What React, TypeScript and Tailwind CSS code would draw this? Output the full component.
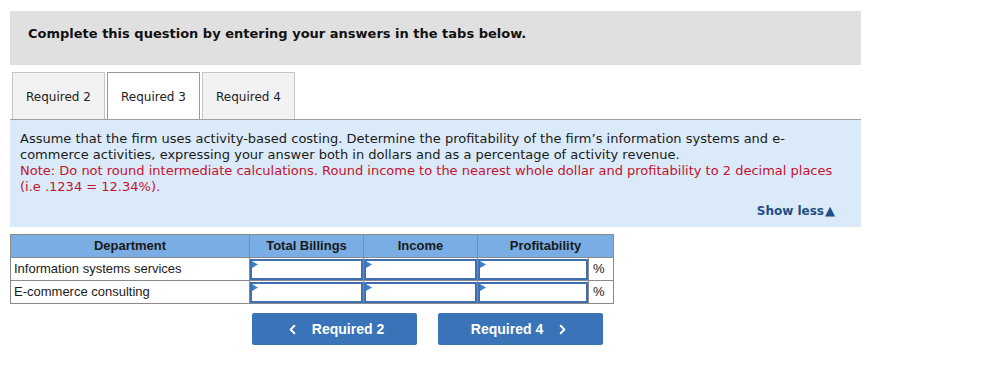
import React from 'react';
import { ChevronLeft, ChevronRight } from 'lucide-react';

const verdana = { fontFamily: '"DejaVu Sans", Verdana, sans-serif' };

// blue input cell with the little marker in the corner
const InputCell: React.FC<{ w: string }> = ({ w }) => (
  <td className={`${w} border border-[#8a8a8a] p-0 bg-white`}>
    <div className="relative h-[21px] border-2 border-[#3f6fae]">
      <svg className="absolute left-0 top-0" width="6" height="8" viewBox="0 0 6 8">
        <polygon points="0,0 6,3.5 0,7" fill="#3f7fd0" />
      </svg>
    </div>
  </td>
);

export default function App() {
  const rows = ['Information systems services', 'E-commerce consulting'];
  return (
    <div className="w-[986px] h-[385px] bg-white pl-[10px] pt-[11px]">
      <div className="w-[851px]">
        {/* header */}
        <div
          className="h-[54px] bg-[#e0e0e0] pl-[18px] pt-[15px] text-[13px] leading-[16px] font-bold text-[#111]"
          style={verdana}
        >
          Complete this question by entering your answers in the tabs below.
        </div>

        {/* tabs */}
        <div className="flex gap-[2px] pl-[2px] mt-[7px] h-[47px]" style={verdana}>
          <div className="w-[93px] border border-b-0 border-[#c6c6c6] bg-[#f2f2f2] flex items-center justify-center pt-[2px] text-[12px] text-[#222]">
            Required 2
          </div>
          <div className="w-[93px] border border-b-0 border-[#9a9a9a] bg-white flex items-center justify-center pt-[2px] text-[12px] text-[#222]">
            Required 3
          </div>
          <div className="w-[93px] border border-b-0 border-[#c6c6c6] bg-[#f2f2f2] flex items-center justify-center pt-[2px] text-[12px] text-[#222]">
            Required 4
          </div>
        </div>

        {/* question panel */}
        <div className="border-t border-[#a0a0a0] bg-[#daeaf8] pl-[10px] pr-[10px] pt-[11px] pb-[8px]" style={verdana}>
          <p className="text-[13px] leading-[16px] text-[#1a1a1a]">
            Assume that the firm uses activity-based costing. Determine the profitability of the firm’s information systems and e-commerce activities, expressing your answer both in dollars and as a percentage of activity revenue.
          </p>
          <p className="text-[13px] leading-[16px] text-[#c4122f]">
            Note: Do not round intermediate calculations. Round income to the nearest whole dollar and profitability to 2 decimal places (i.e .1234 = 12.34%).
          </p>
          <div className="mt-[8px] flex justify-end pr-[16px]">
            <span className="text-[12px] leading-[16px] font-bold text-[#1f4f86]">
              Show less<span className="ml-[1px] text-[13px]">▲</span>
            </span>
          </div>
        </div>

        {/* table */}
        <table
          className="mt-[7px] border-collapse text-[13px] text-[#1a1a1a]"
          style={{ fontFamily: '"Liberation Sans", Arial, sans-serif' }}
        >
          <thead>
            <tr className="bg-[#79ade3] h-[23px]">
              <th className="w-[239px] border border-[#8a8a8a] font-bold text-[#1a1a1a]">Department</th>
              <th className="w-[114px] border border-[#8a8a8a] font-bold">Total Billings</th>
              <th className="w-[114px] border border-[#8a8a8a] font-bold">Income</th>
              <th colSpan={2} className="w-[136px] border border-[#8a8a8a] font-bold">Profitability</th>
            </tr>
          </thead>
          <tbody>
            {rows.map((r) => (
              <tr key={r} className="h-[23px]">
                <td className="border border-[#8a8a8a] pl-[3px] bg-white">{r}</td>
                <InputCell w="w-[114px]" />
                <InputCell w="w-[114px]" />
                <InputCell w="w-[111px]" />
                <td className="w-[25px] border border-[#8a8a8a] pl-[4px] bg-white">%</td>
              </tr>
            ))}
          </tbody>
        </table>

        {/* navigation */}
        <div
          className="flex gap-[21px] ml-[242px] mt-[9px]"
          style={{ fontFamily: '"Liberation Sans", Arial, sans-serif' }}
        >
          <button className="w-[165px] h-[32px] rounded-[2px] bg-[#3a74b8] text-white text-[14px] font-bold flex items-center justify-center gap-[12px]">
            <ChevronLeft size={15} strokeWidth={3} />
            <span>Required 2</span>
          </button>
          <button className="w-[165px] h-[32px] rounded-[2px] bg-[#3a74b8] text-white text-[14px] font-bold flex items-center justify-center gap-[12px]">
            <span>Required 4</span>
            <ChevronRight size={15} strokeWidth={3} />
          </button>
        </div>
      </div>
    </div>
  );
}
